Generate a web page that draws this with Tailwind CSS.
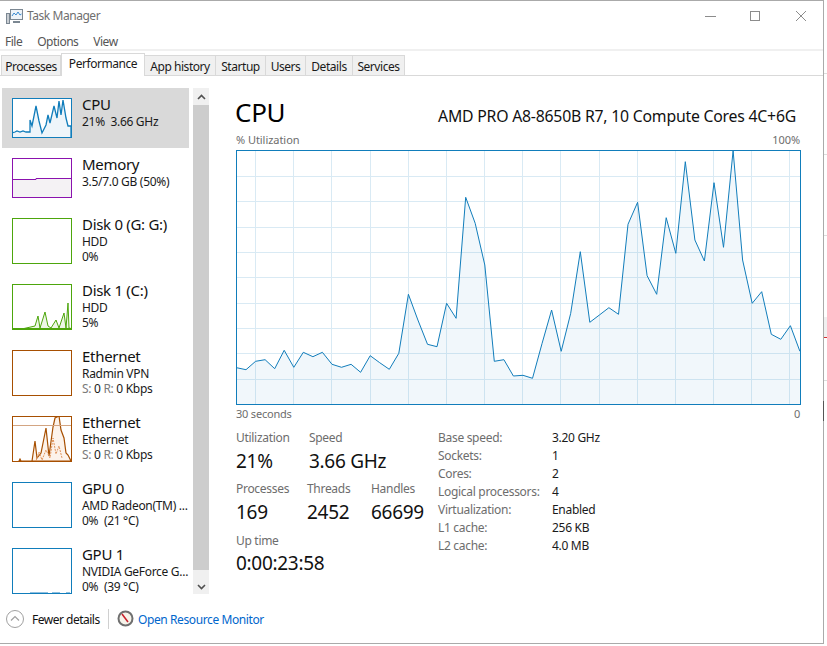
<!DOCTYPE html>
<html lang="en">
<head>
    <meta charset="UTF-8">
    <title>Task Manager</title>
    <script src="https://cdn.jsdelivr.net/npm/@tailwindcss/browser@4"></script>
</head>
<body class="relative h-[646px] bg-white font-['Noto_Sans',sans-serif] text-[12px] leading-[16px] tracking-[-0.3px] text-[#1a1a1a] overflow-hidden">
    <div class="w-[824px] h-[644px] border-t border-r border-b border-[#aaaaaa] flex flex-col">

        <!-- title bar -->
        <div class="h-[30px] flex items-center pl-[6px] shrink-0">
            <svg width="17" height="17" viewBox="0 0 17 17" class="mr-[4px]">
                <rect x="4.500" y="1.500" width="12" height="10" fill="#eef3f8" stroke="#7b8792"/>
                <path d="M6 8l2-3 2 2 2-3 2 3 1.500-1" fill="none" stroke="#3a8ad0"/>
                <rect x="0.500" y="5.500" width="3" height="10" fill="#c9ced3" stroke="#7b8792"/>
                <path d="M7 14h7" stroke="#7b8792" stroke-width="2"/>
            </svg>
            <span class="text-[#6f6f6f] tracking-[-0.45px]">Task Manager</span>
            <div class="ml-auto flex items-center">
                <svg width="12" height="12" viewBox="0 0 12 12" class="mr-[32px]"><path d="M0 6.500h11" stroke="#8c8c8c"/></svg>
                <svg width="12" height="12" viewBox="0 0 12 12" class="mr-[34px]"><rect x="1.500" y="1.500" width="9" height="9" fill="none" stroke="#8c8c8c"/></svg>
                <svg width="12" height="12" viewBox="0 0 12 12" class="mr-[16px]"><path d="M1 1l10 10M11 1L1 11" stroke="#8c8c8c"/></svg>
            </div>
        </div>

        <!-- menu -->
        <div class="h-[18px] flex items-center gap-[15px] pl-[5px] pt-[3px] text-[#555] tracking-[-0.5px] shrink-0">
            <span>File</span><span>Options</span><span>View</span>
        </div>
        <div class="h-[2px] bg-[#f0f0f0] shrink-0"></div>

        <!-- tabs -->
        <div class="h-[25px] flex items-end border-b border-[#d9d9d9] pl-[1px] tracking-[-0.45px] shrink-0">
            <div class="h-[20px] w-[60px] bg-[#f0f0f0] border border-b-0 border-[#d9d9d9] flex items-center justify-center pt-[2px]">Processes</div>
            <div class="h-[23px] w-[84px] bg-white border border-b-0 border-[#d9d9d9] flex items-start pt-[2px] justify-center relative top-[1px]">Performance</div>
            <div class="h-[20px] w-[71px] bg-[#f0f0f0] border border-l-0 border-b-0 border-[#d9d9d9] flex items-center justify-center pt-[2px]">App history</div>
            <div class="h-[20px] w-[50px] bg-[#f0f0f0] border border-l-0 border-b-0 border-[#d9d9d9] flex items-center justify-center pt-[2px]">Startup</div>
            <div class="h-[20px] w-[40px] bg-[#f0f0f0] border border-l-0 border-b-0 border-[#d9d9d9] flex items-center justify-center pt-[2px]">Users</div>
            <div class="h-[20px] w-[47px] bg-[#f0f0f0] border border-l-0 border-b-0 border-[#d9d9d9] flex items-center justify-center pt-[2px]">Details</div>
            <div class="h-[20px] w-[52px] bg-[#f0f0f0] border border-l-0 border-b-0 border-[#d9d9d9] flex items-center justify-center pt-[2px]">Services</div>
        </div>

        <div class="flex flex-1 pt-[12px] min-h-0">
            <!-- sidebar list -->
            <div class="w-[193px] pl-[2px] shrink-0">
                <div class="h-[60px] w-[187px] bg-[#d9d9d9] flex pt-[10px] pl-[10px]">
                    <svg width="60" height="40" viewBox="0 0 60 40" class="mr-[10px] shrink-0">
                        <rect width="60" height="40" fill="#fff"/>
                        <path d="M0 35L3 34 5 33 8 34 11 33 14 34 18 34 18 22 20 28 24 8 27 23 30 35 34 27 36 17 38 25 42 8 45 20 47 3 49 17 51 2 54 20 56 28 59 28V40H0Z" fill="#eef5fa" stroke="#117dbb" stroke-width="1.300"/>
                        <rect x="0.500" y="0.500" width="59" height="39" fill="none" stroke="#117dbb"/>
                    </svg>
                    <div class="-mt-[3px]">
                        <div class="text-[15px] leading-[18px] mb-[1px] text-[#111]">CPU</div>
                        <div>21%&nbsp; 3.66 GHz</div>
                    </div>
                </div>
                <div class="h-[60px] flex pt-[10px] pl-[10px]">
                    <svg width="60" height="40" viewBox="0 0 60 40" class="mr-[10px] shrink-0">
                        <path d="M0 21.500H24V20.500H60V40H0Z" fill="#f4f2f4" stroke="#8b12ae"/>
                        <rect x="0.500" y="0.500" width="59" height="39" fill="none" stroke="#8b12ae"/>
                    </svg>
                    <div class="-mt-[3px]">
                        <div class="text-[15px] leading-[18px] mb-[1px] text-[#111]">Memory</div>
                        <div>3.5/7.0 GB (50%)</div>
                    </div>
                </div>
                <div class="h-[66px] flex pt-[10px] pl-[10px]">
                    <svg width="60" height="46" viewBox="0 0 60 46" class="mr-[10px] shrink-0">
                        <rect x="0.500" y="0.500" width="59" height="45" fill="none" stroke="#4da60c"/>
                    </svg>
                    <div class="-mt-[3px]">
                        <div class="text-[15px] leading-[18px] mb-[1px] text-[#111] whitespace-nowrap">Disk 0 (G: G:)</div>
                        <div class="leading-[15px]">HDD</div>
                        <div class="leading-[15px]">0%</div>
                    </div>
                </div>
                <div class="h-[66px] flex pt-[10px] pl-[10px]">
                    <svg width="60" height="46" viewBox="0 0 60 46" class="mr-[10px] shrink-0">
                        <path d="M1 44.500H12L23 42 26 32 28 44 33 28 36 42 39 44 44 36 47 44 52 29 54 44 56 19 57 44 59 44.500Z" fill="#edf6e6" stroke="#4da60c"/>
                        <rect x="0.500" y="0.500" width="59" height="45" fill="none" stroke="#4da60c"/>
                    </svg>
                    <div class="-mt-[3px]">
                        <div class="text-[15px] leading-[18px] mb-[1px] text-[#111] whitespace-nowrap">Disk 1 (C:)</div>
                        <div class="leading-[15px]">HDD</div>
                        <div class="leading-[15px]">5%</div>
                    </div>
                </div>
                <div class="h-[66px] flex pt-[10px] pl-[10px]">
                    <svg width="60" height="46" viewBox="0 0 60 46" class="mr-[10px] shrink-0">
                        <rect x="0.500" y="0.500" width="59" height="45" fill="none" stroke="#a74f01"/>
                    </svg>
                    <div class="-mt-[3px]">
                        <div class="text-[15px] leading-[18px] mb-[1px] text-[#111]">Ethernet</div>
                        <div class="leading-[15px]">Radmin VPN</div>
                        <div class="leading-[15px]"><span class="text-[#7a7a7a]">S:</span> 0 <span class="text-[#7a7a7a]">R:</span> 0 Kbps</div>
                    </div>
                </div>
                <div class="h-[66px] flex pt-[10px] pl-[10px]">
                    <svg width="60" height="46" viewBox="0 0 60 46" class="mr-[10px] shrink-0">
                        <path d="M7 45L8 43 9 45H20L23 25 25 42 29 37 34 12 37 40 41 11 43 2 47 0 49 14 52 22 54 37 56 39 59 45Z" fill="#fcf3eb" stroke="#a74f01" stroke-width="1.200"/>
                        <path d="M24 45L27 36 30 44 34 34 38 42 41 22 44 38 47 30 50 42" fill="none" stroke="#e0935a" stroke-dasharray="2 1"/>
                        <path d="M0 9.500H60" stroke="#d3a582"/>
                        <rect x="0.500" y="0.500" width="59" height="45" fill="none" stroke="#a74f01"/>
                    </svg>
                    <div class="-mt-[3px]">
                        <div class="text-[15px] leading-[18px] mb-[1px] text-[#111]">Ethernet</div>
                        <div class="leading-[15px]">Ethernet</div>
                        <div class="leading-[15px]"><span class="text-[#7a7a7a]">S:</span> 0 <span class="text-[#7a7a7a]">R:</span> 0 Kbps</div>
                    </div>
                </div>
                <div class="h-[66px] flex pt-[10px] pl-[10px]">
                    <svg width="60" height="46" viewBox="0 0 60 46" class="mr-[10px] shrink-0">
                        <rect x="0.500" y="0.500" width="59" height="45" fill="none" stroke="#117dbb"/>
                    </svg>
                    <div class="-mt-[3px]">
                        <div class="text-[15px] leading-[18px] mb-[1px] text-[#111]">GPU 0</div>
                        <div class="leading-[15px] whitespace-nowrap">AMD Radeon(TM) ...</div>
                        <div class="leading-[15px]">0%&nbsp; (21 °C)</div>
                    </div>
                </div>
                <div class="h-[56px] flex pt-[10px] pl-[10px]">
                    <svg width="60" height="46" viewBox="0 0 60 46" class="mr-[10px] shrink-0">
                        <path d="M18 44.500H36M40 44.500H48M54 44.500H58" stroke="#8fbfdf"/>
                        <rect x="0.500" y="0.500" width="59" height="45" fill="none" stroke="#117dbb"/>
                    </svg>
                    <div class="-mt-[3px]">
                        <div class="text-[15px] leading-[18px] mb-[1px] text-[#111]">GPU 1</div>
                        <div class="leading-[15px] whitespace-nowrap">NVIDIA GeForce G...</div>
                        <div class="leading-[15px]">0%&nbsp; (39 °C)</div>
                    </div>
                </div>
            </div>

            <!-- scrollbar -->
            <div class="w-[16px] h-[506px] bg-[#f0f0f0] flex flex-col shrink-0">
                <div class="h-[17px] flex items-center justify-center">
                    <svg width="9" height="6" viewBox="0 0 9 6"><path d="M1 5l3.500-3.500L8 5" fill="none" stroke="#505050" stroke-width="1.600"/></svg>
                </div>
                <div class="flex-1 bg-[#cdcdcd]"></div>
                <div class="h-[24px] flex items-end justify-center pb-[4px]">
                    <svg width="9" height="6" viewBox="0 0 9 6"><path d="M1 1l3.500 3.500L8 1" fill="none" stroke="#505050" stroke-width="1.600"/></svg>
                </div>
            </div>

            <!-- performance pane -->
            <div class="flex-1 pl-[27px] pr-[22px] min-w-0">
                <div class="flex items-center justify-between h-[39px] pt-[8px] -ml-[1px]">
                    <span class="text-[26px] leading-[30px] text-black">CPU</span>
                    <span class="text-[15.800px] leading-[20px] tracking-[-0.22px] text-[#111] pr-[5px] pt-[8px] whitespace-nowrap">AMD PRO A8-8650B R7, 10 Compute Cores 4C+6G</span>
                </div>
                <div class="flex justify-between text-[#6d6d6d] h-[20px] items-center mt-[3px] pr-[1px] tracking-[-0.05px]">
                    <span class="text-[11px]">% Utilization</span><span class="text-[11px]">100%</span>
                </div>
                <svg width="565" height="256" viewBox="236 150 565 256" class="block">
                    <rect x="236" y="150" width="565" height="256" fill="#fff"/>
                    <path d="M255.500 150V405M293.500 150V405M331.500 150V405M370.500 150V405M408.500 150V405M446.500 150V405M484.500 150V405M522.500 150V405M560.500 150V405M599.500 150V405M637.500 150V405M675.500 150V405M713.500 150V405M751.500 150V405M789.500 150V405M236 176.500H800M236 201.500H800M236 227.500H800M236 252.500H800M236 277.500H800M236 303.500H800M236 328.500H800M236 353.500H800M236 379.500H800" stroke="#d9eaf4" stroke-width="1"/>
                    <polygon fill="#117dbb" fill-opacity="0.06" points="236.500,405 236.500,367.700 246,369.700 255.600,361.300 265.100,359.700 274.700,368.700 284.200,350.300 293.800,367.300 303.300,352.300 312.900,356.700 322.400,352.300 332,364.300 341.500,367.300 351.100,364.300 360.600,372.300 370.200,355.700 379.700,362.700 389.300,369.300 398.800,353.300 408.400,294.300 417.900,320 427.500,344.300 437,346.700 446.600,303.300 456.100,318.300 465.700,197.300 475.200,223.300 484.800,265 494.300,361.300 503.900,359.700 513.400,376 523,375.300 532.500,378.300 542.100,343.300 551.600,310 561.200,351.300 570.700,313.300 580.300,251.700 589.800,322.300 599.400,315 608.900,307.700 618.500,314.300 628,224.300 637.600,202.300 647.100,275.700 656.700,294.300 666.200,217.700 675.800,253.300 685.300,161.700 694.900,240 704.400,261 714,182.700 723.500,247.300 733.100,150.700 742.600,260 752.200,303.300 761.700,291.700 771.300,334.300 780.800,339.300 790.400,325.700 799.900,351.300 799.900,405"/>
                    <polyline fill="none" stroke="#117dbb" stroke-width="1" points="236.500,367.700 246,369.700 255.600,361.300 265.100,359.700 274.700,368.700 284.200,350.300 293.800,367.300 303.300,352.300 312.900,356.700 322.400,352.300 332,364.300 341.500,367.300 351.100,364.300 360.600,372.300 370.200,355.700 379.700,362.700 389.300,369.300 398.800,353.300 408.400,294.300 417.900,320 427.500,344.300 437,346.700 446.600,303.300 456.100,318.300 465.700,197.300 475.200,223.300 484.800,265 494.300,361.300 503.900,359.700 513.400,376 523,375.300 532.500,378.300 542.100,343.300 551.600,310 561.200,351.300 570.700,313.300 580.300,251.700 589.800,322.300 599.400,315 608.900,307.700 618.500,314.300 628,224.300 637.600,202.300 647.100,275.700 656.700,294.300 666.200,217.700 675.800,253.300 685.300,161.700 694.900,240 704.400,261 714,182.700 723.500,247.300 733.100,150.700 742.600,260 752.200,303.300 761.700,291.700 771.300,334.300 780.800,339.300 790.400,325.700 799.900,351.300"/>
                    <rect x="236.500" y="150.500" width="564" height="254" fill="none" stroke="#117dbb"/>
                </svg>
                <div class="flex justify-between text-[11px] text-[#6d6d6d] h-[16px] items-center pr-[1px] tracking-[-0.2px]">
                    <span>30 seconds</span><span>0</span>
                </div>

                <!-- stats -->
                <div class="flex pt-[8px]">
                    <div class="w-[202px] shrink-0">
                        <div class="flex">
                            <div class="w-[73px]">
                                <div class="text-[#6d6d6d] h-[16px]">Utilization</div>
                                <div class="text-[19px] leading-[26px] mt-[2px] text-[#111]">21%</div>
                            </div>
                            <div>
                                <div class="text-[#6d6d6d] h-[16px]">Speed</div>
                                <div class="text-[19px] leading-[26px] mt-[2px] text-[#111]">3.66 GHz</div>
                            </div>
                        </div>
                        <div class="flex mt-[7px]">
                            <div class="w-[71px]">
                                <div class="text-[#6d6d6d] h-[16px]">Processes</div>
                                <div class="text-[19px] leading-[26px] mt-[2px] text-[#111]">169</div>
                            </div>
                            <div class="w-[64px]">
                                <div class="text-[#6d6d6d] h-[16px]">Threads</div>
                                <div class="text-[19px] leading-[26px] mt-[2px] text-[#111]">2452</div>
                            </div>
                            <div>
                                <div class="text-[#6d6d6d] h-[16px]">Handles</div>
                                <div class="text-[19px] leading-[26px] mt-[2px] text-[#111]">66699</div>
                            </div>
                        </div>
                        <div class="mt-[8px]">
                            <div class="text-[#6d6d6d] h-[16px]">Up time</div>
                            <div class="text-[19px] leading-[26px] mt-[1px] text-[#111]">0:00:23:58</div>
                        </div>
                    </div>
                    <div class="grid grid-cols-[114px_auto] auto-rows-[18px] items-center self-start -mt-[1px]">
                        <span class="text-[#6d6d6d]">Base speed:</span><span>3.20 GHz</span>
                        <span class="text-[#6d6d6d]">Sockets:</span><span>1</span>
                        <span class="text-[#6d6d6d]">Cores:</span><span>2</span>
                        <span class="text-[#6d6d6d] whitespace-nowrap">Logical processors:</span><span>4</span>
                        <span class="text-[#6d6d6d]">Virtualization:</span><span>Enabled</span>
                        <span class="text-[#6d6d6d]">L1 cache:</span><span>256 KB</span>
                        <span class="text-[#6d6d6d]">L2 cache:</span><span>4.0 MB</span>
                    </div>
                </div>
            </div>
        </div>

        <!-- footer -->
        <div class="h-[49px] flex items-center pl-[6px] shrink-0">
            <svg width="18" height="18" viewBox="0 0 18 18" class="mr-[8px]">
                <circle cx="9" cy="9" r="8.500" fill="#fff" stroke="#a0a0a0"/>
                <path d="M5 10.500l4-4 4 4" fill="none" stroke="#a0a0a0" stroke-width="1.200"/>
            </svg>
            <span class="text-[#111] w-[76px] pt-[2px] tracking-[-0.5px] whitespace-nowrap">Fewer details</span>
            <div class="w-px h-[20px] bg-[#d0d0d0] mr-[8px]"></div>
            <svg width="17" height="17" viewBox="0 0 17 17" class="mr-[4px]">
                <circle cx="8.500" cy="8.500" r="7" fill="#f6f3ea" stroke="#6f6f6f" stroke-width="2"/>
                <path d="M5 4l6 8" stroke="#c8202a" stroke-width="1.600"/>
            </svg>
            <span class="text-[#0066cc] pt-[2px] tracking-[-0.4px]">Open Resource Monitor</span>
        </div>
    </div>

    <!-- bits of the desktop showing beyond the window edge -->
    <div class="absolute left-[824px] top-[73px] w-[3px] h-px bg-[#dddddd]"></div>
    <div class="absolute left-[824px] top-[154px] w-[3px] h-px bg-[#dddddd]"></div>
    <div class="absolute left-[824px] top-[235px] w-[3px] h-px bg-[#dddddd]"></div>
    <div class="absolute left-[824px] top-[317px] w-[3px] h-[20px] bg-[#f0f0f0]"></div>
    <div class="absolute left-[824px] top-[337px] w-[3px] h-px bg-[#d23030]"></div>
    <div class="absolute left-[824px] top-[380px] w-[3px] h-px bg-[#dddddd]"></div>
    <div class="absolute left-[823px] top-[401px] w-px h-[20px] bg-[#555555]"></div>
</body>
</html>
